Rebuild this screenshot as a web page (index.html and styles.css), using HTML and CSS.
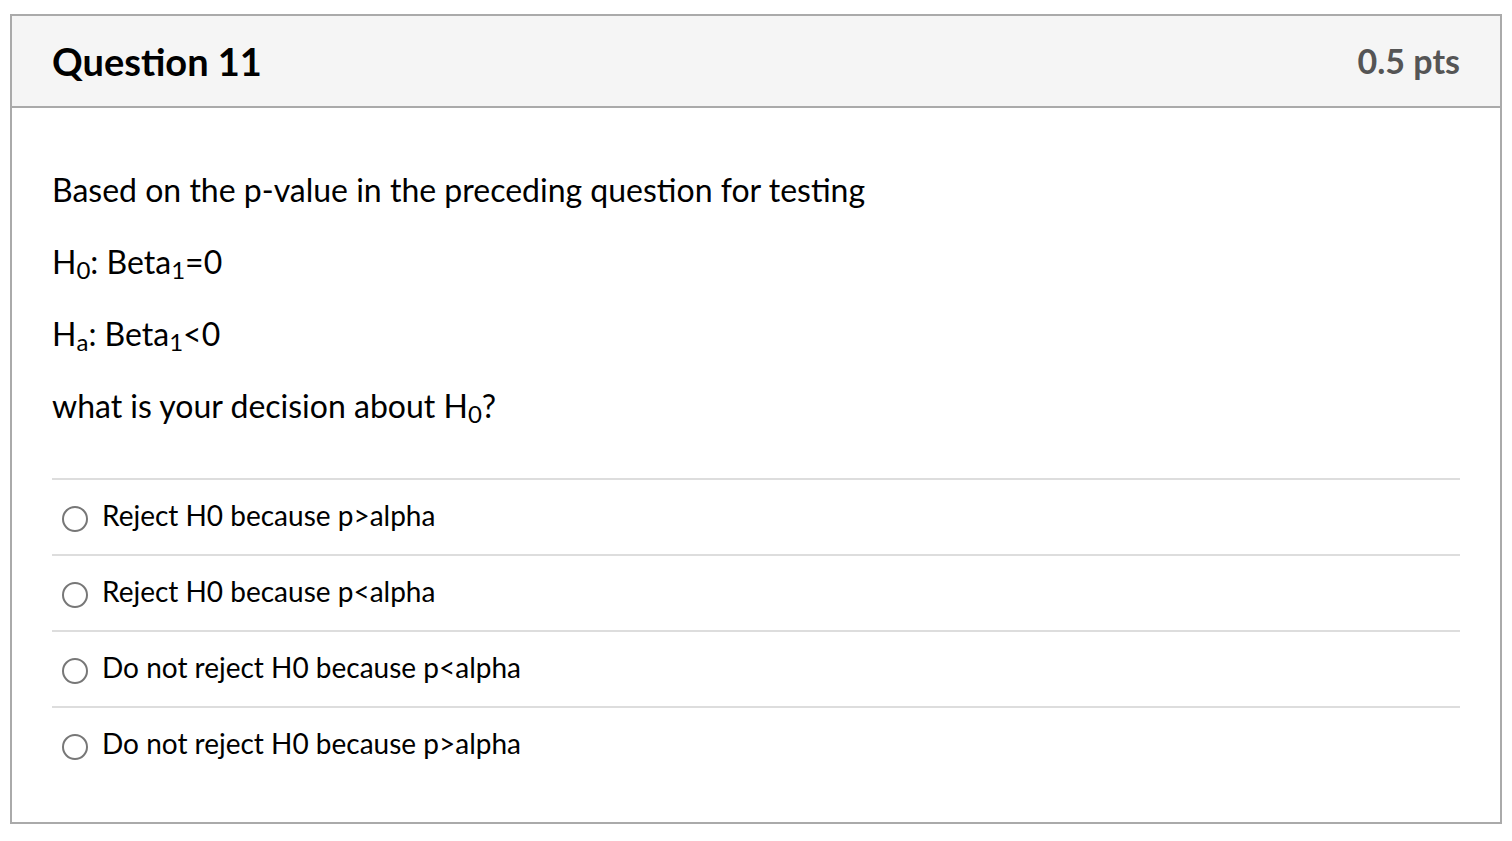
FILE: index.html
```html
<!DOCTYPE html>
<html lang="en">
<head>
<meta charset="utf-8">
<title>Question 11</title>
<link rel="stylesheet" href="styles.css">
</head>
<body>
<div class="page">
  <div class="question">
    <div class="question-header">
      <h2 class="question-title">Question 11</h2>
      <span class="question-points">0.5 pts</span>
    </div>
    <div class="question-body">
      <div class="question-text">
        <p>Based on the p-value in the preceding question for testing</p>
        <p>H<sub>0</sub>: Beta<sub>1</sub>=0</p>
        <p>H<sub>a</sub>: Beta<sub>1</sub>&lt;0</p>
        <p>what is your decision about H<sub>0</sub>?</p>
      </div>
      <div class="answers">
        <label class="answer"><span class="radio"></span><span class="answer-text">Reject H0 because p&gt;alpha</span></label>
        <label class="answer"><span class="radio"></span><span class="answer-text">Reject H0 because p&lt;alpha</span></label>
        <label class="answer"><span class="radio"></span><span class="answer-text">Do not reject H0 because p&lt;alpha</span></label>
        <label class="answer"><span class="radio"></span><span class="answer-text">Do not reject H0 because p&gt;alpha</span></label>
      </div>
    </div>
  </div>
</div>
</body>
</html>
```

FILE: styles.css
```css
html, body {
  margin: 0;
  padding: 0;
  background: #ffffff;
}

body {
  font-family: Lato, "Open Sans", "Liberation Sans", sans-serif;
  color: #000000;
}

.page {
  padding: 14px 10px 17px 10px;
}

.question {
  border: 2px solid #aaaaaa;
  background: #ffffff;
}

.question-header {
  display: flex;
  align-items: center;
  justify-content: space-between;
  height: 90px;
  padding: 0 40px;
  background: #f5f5f5;
  border-bottom: 2px solid #aaaaaa;
}

.question-title {
  margin: 0;
  font-size: 38px;
  font-weight: 700;
  color: #000000;
  line-height: 1;
}

.question-points {
  font-size: 34px;
  font-weight: 700;
  color: #555555;
  line-height: 1;
}

.question-body {
  padding: 58px 40px 40px 40px;
}

.question-text {
  padding-bottom: 48px;
}

.question-text p {
  margin: 0 0 24px 0;
  font-size: 32px;
  line-height: 48px;
}

.question-text p:last-child {
  margin-bottom: 0;
}

.question-text sub {
  font-size: 75%;
  line-height: 0;
  vertical-align: -0.22em;
}

.answers {
  display: flex;
  flex-direction: column;
}

.answer {
  display: flex;
  align-items: center;
  height: 74px;
  box-sizing: content-box;
  border-top: 2px solid #dddddd;
  padding-left: 10px;
}

.answer-text {
  font-size: 28px;
  line-height: 1;
  margin-bottom: 4px;
}

.radio {
  width: 22px;
  height: 22px;
  border: 2px solid #777777;
  border-radius: 50%;
  flex: none;
  margin-right: 14px;
  margin-top: 4px;
}
```
